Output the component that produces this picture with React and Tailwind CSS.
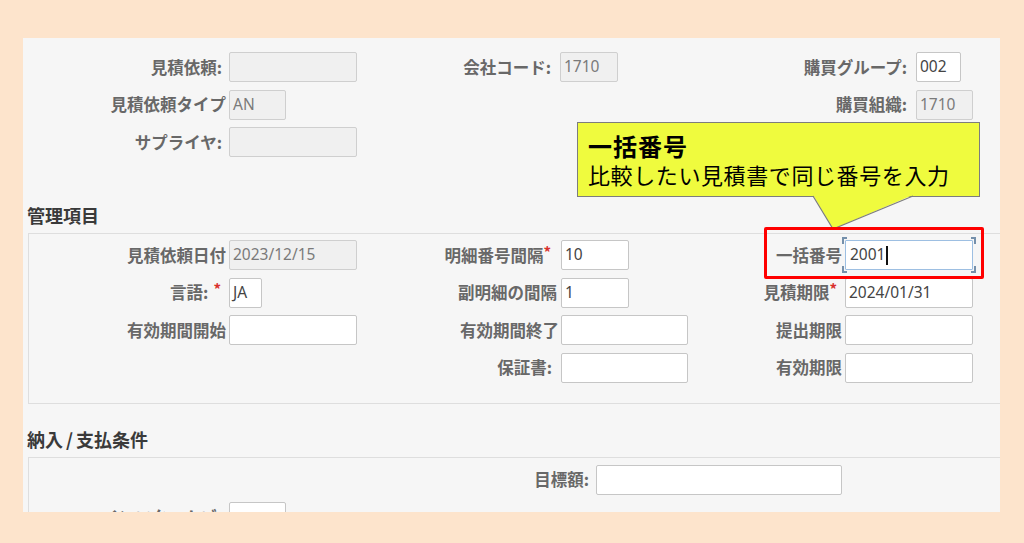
import React from "react";

const LABEL_FONT = "font-['Noto_Sans_CJK_JP','Noto_Sans',sans-serif]";
const INPUT_FONT = "font-['Noto_Sans','Open_Sans',sans-serif]";

function Box({ w, value, disabled, children }) {
  return (
    <div
      className={`${w} h-[30px] shrink-0 rounded-[2px] border ${
        disabled ? "border-[#cfcfcf] bg-[#f0f0f0] text-[#7a7a7a]" : "border-[#c6c6c6] bg-white text-[#444]"
      } flex items-center pl-[3px] text-[15.5px] ${INPUT_FONT}`}
    >
      {value}
      {children}
    </div>
  );
}

function Label({ lw, pr, text, star, spaceStar }) {
  return (
    <div
      className={`${lw} ${pr} shrink-0 h-full flex items-center justify-end whitespace-nowrap text-[16.5px] font-bold text-[#686868] ${LABEL_FONT}`}
    >
      <span>{text}</span>
      {star && (
        <span className={`text-[#d9302c] text-[15px] -mt-[6px] ${spaceStar ? "ml-[5px]" : ""}`}>*</span>
      )}
    </div>
  );
}

function Field({ cw, lw, pr = "pr-[7px]", label, star, spaceStar, input }) {
  return (
    <div className={`${cw} shrink-0 h-full flex items-center`}>
      {label !== undefined && <Label lw={lw} pr={pr} text={label} star={star} spaceStar={spaceStar} />}
      {input}
    </div>
  );
}

function FocusInput() {
  return (
    <div className="relative w-[128px] h-[30px] shrink-0">
      <div
        className={`w-full h-full border border-[#9dbfe2] bg-white rounded-[1px] flex items-center pl-[4px] text-[15.5px] text-[#444] ${INPUT_FONT}`}
      >
        2001
        <span className="ml-[1px] w-[2px] h-[19px] bg-[#111]" />
      </div>
      <span className="absolute -left-[3px] -top-[3px] w-[5px] h-[7px] border-l-2 border-t-2 border-[#7590ab]" />
      <span className="absolute -right-[3px] -top-[3px] w-[5px] h-[7px] border-r-2 border-t-2 border-[#7590ab]" />
      <span className="absolute -left-[3px] -bottom-[3px] w-[5px] h-[7px] border-l-2 border-b-2 border-[#7590ab]" />
      <span className="absolute -right-[3px] -bottom-[3px] w-[5px] h-[7px] border-r-2 border-b-2 border-[#7590ab]" />
    </div>
  );
}

function SectionHeader({ children, mt }) {
  return (
    <div
      className={`${mt} h-[30px] flex items-center -ml-[1px] text-[18px] font-bold text-[#3a3a3a] ${LABEL_FONT}`}
    >
      {children}
    </div>
  );
}

export default function App() {
  return (
    <div className="relative w-[1024px] h-[543px] overflow-hidden bg-[#fde4cc] pt-[38px] pl-[23px]">
      <div className="w-[977px] h-[474px] overflow-hidden bg-[#f6f6f6]">
        {/* top section */}
        <div className="pt-[14px] flex flex-col gap-[7.5px]">
          <div className="flex h-[30px]">
            <Field cw="w-[357px]" lw="w-[206px]" label="見積依頼:" input={<Box w="w-[128px]" disabled />} />
            <Field
              cw="w-[320px]"
              lw="w-[180px]"
              pr="pr-[9px]"
              label="会社コード:"
              input={<Box w="w-[58px]" value="1710" disabled />}
            />
            <Field
              cw="flex-1"
              lw="w-[216px]"
              pr="pr-[9px]"
              label="購買グループ:"
              input={<Box w="w-[45px]" value="002" />}
            />
          </div>
          <div className="flex h-[30px]">
            <Field
              cw="w-[357px]"
              lw="w-[206px]"
              pr="pr-[3px]"
              label="見積依頼タイプ"
              input={<Box w="w-[57px]" value="AN" disabled />}
            />
            <Field cw="w-[320px]" />
            <Field
              cw="flex-1"
              lw="w-[216px]"
              pr="pr-[9px]"
              label="購買組織:"
              input={<Box w="w-[57px]" value="1710" disabled />}
            />
          </div>
          <div className="flex h-[30px]">
            <Field cw="w-[357px]" lw="w-[206px]" label="サプライヤ:" input={<Box w="w-[128px]" disabled />} />
          </div>
        </div>

        <div className="pl-[5px]">
          <SectionHeader mt="mt-[43px]">管理項目</SectionHeader>
          <div className="mt-[3px] border-t border-l border-b border-[#dedede] pt-[6px] pb-[20px] flex flex-col gap-[7.5px]">
            <div className="flex h-[30px]">
              <Field
                cw="w-[351px]"
                lw="w-[200px]"
                pr="pr-[3px]"
                label="見積依頼日付"
                input={<Box w="w-[128px]" value="2023/12/15" disabled />}
              />
              <Field
                cw="w-[320px]"
                lw="w-[181px]"
                pr="pr-[10px]"
                label="明細番号間隔"
                star
                input={<Box w="w-[68px]" value="10" />}
              />
              <Field cw="flex-1" lw="w-[145px]" pr="pr-[3px]" label="一括番号" input={<FocusInput />} />
            </div>
            <div className="flex h-[30px]">
              <Field
                cw="w-[351px]"
                lw="w-[200px]"
                pr="pr-[8px]"
                label="言語:"
                star
                spaceStar
                input={<Box w="w-[33px]" value="JA" />}
              />
              <Field
                cw="w-[320px]"
                lw="w-[181px]"
                pr="pr-[4px]"
                label="副明細の間隔"
                input={<Box w="w-[68px]" value="1" />}
              />
              <Field
                cw="flex-1"
                lw="w-[145px]"
                pr="pr-[8px]"
                label="見積期限"
                star
                input={<Box w="w-[128px]" value="2024/01/31" />}
              />
            </div>
            <div className="flex h-[30px]">
              <Field
                cw="w-[351px]"
                lw="w-[200px]"
                pr="pr-[3px]"
                label="有効期間開始"
                input={<Box w="w-[128px]" />}
              />
              <Field
                cw="w-[320px]"
                lw="w-[181px]"
                pr="pr-[2px]"
                label="有効期間終了"
                input={<Box w="w-[127px]" />}
              />
              <Field cw="flex-1" lw="w-[145px]" pr="pr-[3px]" label="提出期限" input={<Box w="w-[128px]" />} />
            </div>
            <div className="flex h-[30px]">
              <Field cw="w-[351px]" />
              <Field
                cw="w-[320px]"
                lw="w-[181px]"
                pr="pr-[9px]"
                label="保証書:"
                input={<Box w="w-[127px]" />}
              />
              <Field cw="flex-1" lw="w-[145px]" pr="pr-[3px]" label="有効期限" input={<Box w="w-[128px]" />} />
            </div>
          </div>

          <SectionHeader mt="mt-[21px]">
            納入<span className="mx-[3px]">/</span>支払条件
          </SectionHeader>
          <div className="mt-[2px] border-t border-l border-[#dedede] pt-[7px] flex flex-col gap-[7.5px]">
            <div className="flex h-[30px]">
              <Field cw="w-[351px]" />
              <Field
                cw="w-[480px]"
                lw="w-[216px]"
                pr="pr-[7px]"
                label="目標額:"
                input={<Box w="w-[246px]" />}
              />
            </div>
            <div className="flex h-[30px]">
              <Field
                cw="w-[351px]"
                lw="w-[200px]"
                pr="pr-[7px]"
                label="インコタームズ:"
                input={<Box w="w-[57px]" />}
              />
            </div>
          </div>
        </div>
      </div>

      {/* callout */}
      <div
        className={`absolute left-[577px] top-[122px] w-[403px] h-[75px] bg-[#effb3e] border border-[#7d7d7d] pl-[10px] pt-[9px] text-black ${LABEL_FONT}`}
      >
        <div className="h-[28px] leading-[28px] text-[24px] font-bold tracking-[1px]">一括番号</div>
        <div className="h-[28px] leading-[28px] text-[22px] tracking-[0.6px]">比較したい見積書で同じ番号を入力</div>
      </div>
      <svg className="absolute left-[810px] top-[195px]" width="106" height="36" viewBox="0 0 106 36">
        <polygon points="3,0 103,0 23,34" fill="#effb3e" />
        <polyline points="3,1 23,34 103,1" fill="none" stroke="#7d7d7d" strokeWidth="1.2" />
      </svg>

      {/* red highlight */}
      <div className="absolute left-[764px] top-[227px] w-[220px] h-[52px] border-[3px] border-[#ff0000] rounded-[2px]" />
    </div>
  );
}
